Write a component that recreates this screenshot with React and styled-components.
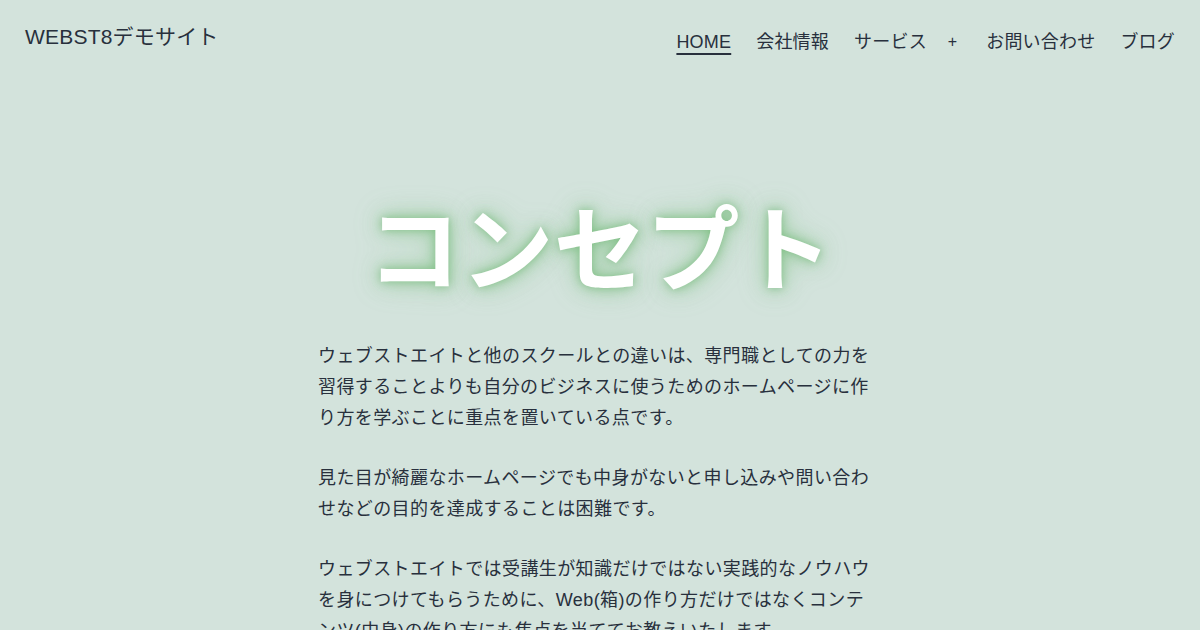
import styled, { createGlobalStyle } from "styled-components";

const GlobalStyle = createGlobalStyle`
  html, body {
    margin: 0;
    padding: 0;
    background: #d3e3dc;
  }
  body {
    font-family: "Liberation Sans", "Noto Sans CJK JP", sans-serif;
    color: #28303d;
    overflow: hidden;
  }
`;

const Page = styled.div`
  width: 1200px;
  height: 630px;
  background: #d3e3dc;
  overflow: hidden;
`;

const Header = styled.header`
  display: flex;
  justify-content: space-between;
  align-items: flex-start;
  padding: 23px 25px 0 25px;
  height: 70px;
  box-sizing: border-box;
`;

const SiteTitle = styled.div`
  font-size: 21px;
  line-height: 28px;
  letter-spacing: 0.2px;
`;

const Nav = styled.nav`
  display: flex;
  align-items: center;
  gap: 25px;
  padding-top: 5px;
`;

const NavLink = styled.a`
  font-size: 18px;
  line-height: 28px;
  letter-spacing: 0.2px;
  color: #28303d;
  text-decoration: ${(p) => (p.$current ? "underline" : "none")};
  text-decoration-thickness: 2px;
  text-underline-offset: 5px;
`;

const Plus = styled.span`
  font-size: 16px;
  line-height: 28px;
  margin: 0 4px 0 -4px;
`;

const Main = styled.main`
  padding-top: 120px;
`;

const Title = styled.h1`
  margin: 0;
  text-align: center;
  color: #ffffff;
  font-family: "Noto Sans CJK JP", sans-serif;
  font-weight: 700;
  font-size: 93px;
  line-height: 108px;
  text-shadow: 0 0 8px rgba(115, 185, 120, 0.7), 0 0 18px rgba(120, 190, 125, 0.6),
    0 0 30px rgba(130, 195, 135, 0.4);
`;

const Content = styled.div`
  width: 564px;
  margin: 43px auto 0;
`;

const Para = styled.p`
  margin: 0 0 29px;
  font-size: 18px;
  line-height: 31px;
  letter-spacing: 0.4px;
`;

export default function App() {
  return (
    <Page>
      <GlobalStyle />
      <Header>
        <SiteTitle>WEBST8デモサイト</SiteTitle>
        <Nav>
          <NavLink $current>HOME</NavLink>
          <NavLink>会社情報</NavLink>
          <NavLink>サービス</NavLink>
          <Plus>+</Plus>
          <NavLink>お問い合わせ</NavLink>
          <NavLink>ブログ</NavLink>
        </Nav>
      </Header>
      <Main>
        <Title>コンセプト</Title>
        <Content>
          <Para>
            ウェブストエイトと他のスクールとの違いは、専門職としての力を習得することよりも自分のビジネスに使うためのホームページに作り方を学ぶことに重点を置いている点です。
          </Para>
          <Para>
            見た目が綺麗なホームページでも中身がないと申し込みや問い合わせなどの目的を達成することは困難です。
          </Para>
          <Para>
            ウェブストエイトでは受講生が知識だけではない実践的なノウハウを身につけてもらうために、Web(箱)の作り方だけではなくコンテンツ(中身)の作り方にも焦点を当ててお教えいたします。
          </Para>
        </Content>
      </Main>
    </Page>
  );
}
